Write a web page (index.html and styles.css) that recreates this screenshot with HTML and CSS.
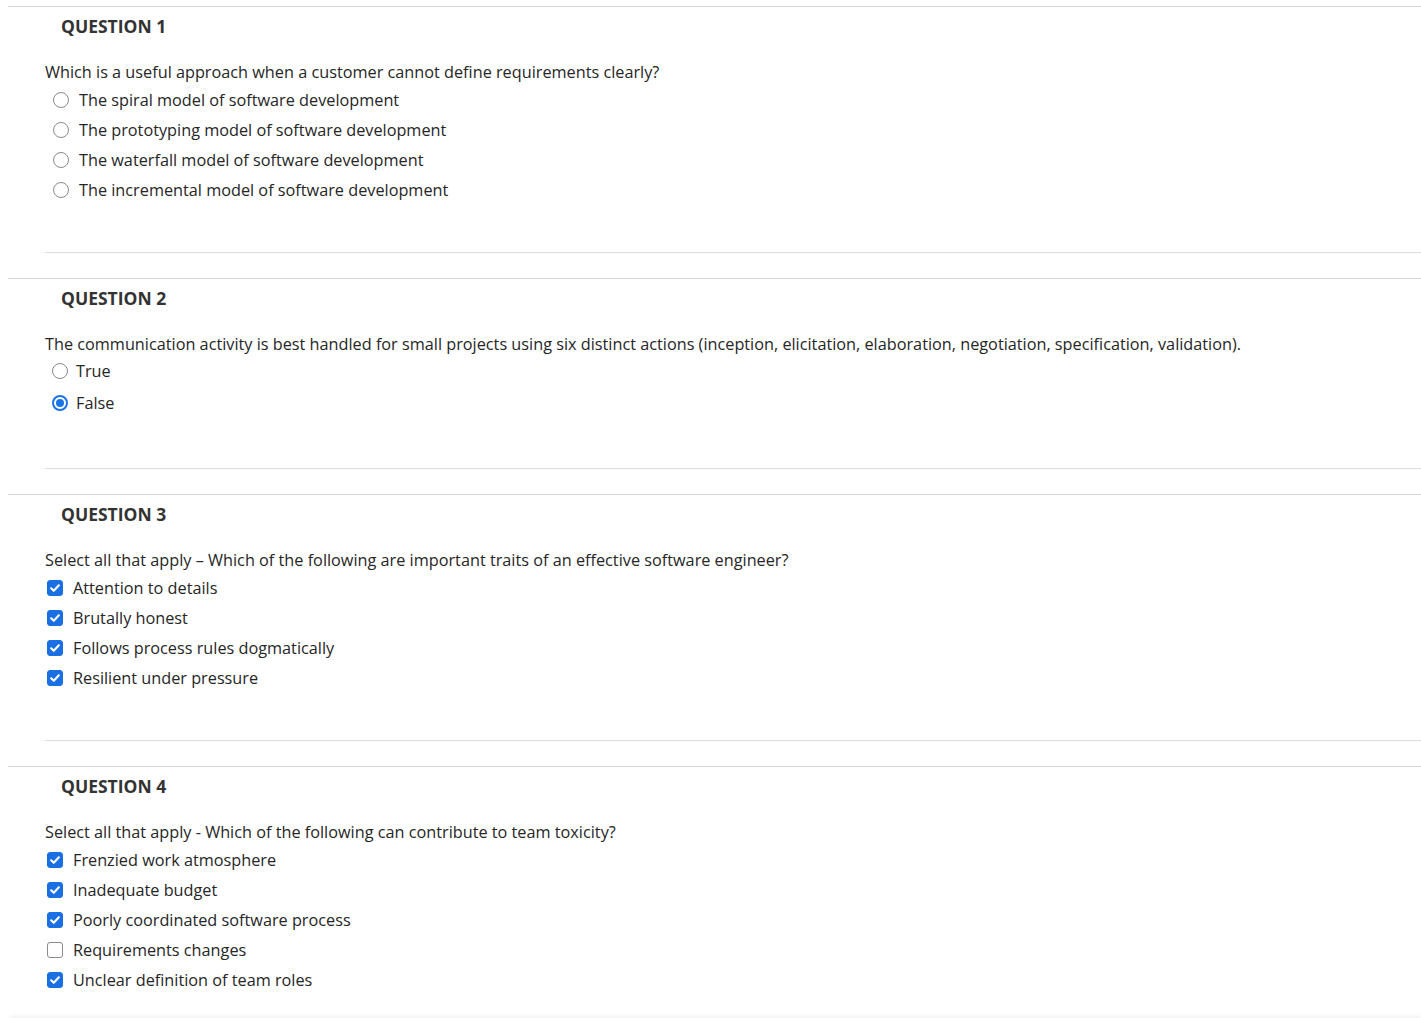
FILE: index.html
```html
<!DOCTYPE html>
<html>
<head>
<meta charset="utf-8">
<link rel="stylesheet" href="styles.css">
</head>
<body>
<div class="page">
  <section class="q">
    <h2 class="q-head">QUESTION 1</h2>
    <div class="q-body">
      <p class="q-text">Which is a useful approach when a customer cannot define requirements clearly?</p>
      <ul class="opts opts-r1">
        <li><span class="radio"></span>The spiral model of software development</li>
        <li><span class="radio"></span>The prototyping model of software development</li>
        <li><span class="radio"></span>The waterfall model of software development</li>
        <li><span class="radio"></span>The incremental model of software development</li>
      </ul>
    </div>
  </section>
  <section class="q">
    <h2 class="q-head">QUESTION 2</h2>
    <div class="q-body q-body-tf">
      <p class="q-text">The communication activity is best handled for small projects using six distinct actions (inception, elicitation, elaboration, negotiation, specification, validation).</p>
      <ul class="opts opts-r2">
        <li><span class="radio"></span>True</li>
        <li><span class="radio checked"></span>False</li>
      </ul>
    </div>
  </section>
  <section class="q">
    <h2 class="q-head">QUESTION 3</h2>
    <div class="q-body">
      <p class="q-text">Select all that apply – Which of the following are important traits of an effective software engineer?</p>
      <ul class="opts opts-c">
        <li><span class="cb on"><svg viewBox="0 0 16 16"><path d="M3.6 8.3 L6.6 11.2 L12.4 4.9" fill="none" stroke="#fff" stroke-width="2.4" stroke-linecap="round" stroke-linejoin="round"/></svg></span>Attention to details</li>
        <li><span class="cb on"><svg viewBox="0 0 16 16"><path d="M3.6 8.3 L6.6 11.2 L12.4 4.9" fill="none" stroke="#fff" stroke-width="2.4" stroke-linecap="round" stroke-linejoin="round"/></svg></span>Brutally honest</li>
        <li><span class="cb on"><svg viewBox="0 0 16 16"><path d="M3.6 8.3 L6.6 11.2 L12.4 4.9" fill="none" stroke="#fff" stroke-width="2.4" stroke-linecap="round" stroke-linejoin="round"/></svg></span>Follows process rules dogmatically</li>
        <li><span class="cb on"><svg viewBox="0 0 16 16"><path d="M3.6 8.3 L6.6 11.2 L12.4 4.9" fill="none" stroke="#fff" stroke-width="2.4" stroke-linecap="round" stroke-linejoin="round"/></svg></span>Resilient under pressure</li>
      </ul>
    </div>
  </section>
  <section class="q q-last">
    <h2 class="q-head">QUESTION 4</h2>
    <div class="q-body q-body-last">
      <p class="q-text">Select all that apply - Which of the following can contribute to team toxicity?</p>
      <ul class="opts opts-c">
        <li><span class="cb on"><svg viewBox="0 0 16 16"><path d="M3.6 8.3 L6.6 11.2 L12.4 4.9" fill="none" stroke="#fff" stroke-width="2.4" stroke-linecap="round" stroke-linejoin="round"/></svg></span>Frenzied work atmosphere</li>
        <li><span class="cb on"><svg viewBox="0 0 16 16"><path d="M3.6 8.3 L6.6 11.2 L12.4 4.9" fill="none" stroke="#fff" stroke-width="2.4" stroke-linecap="round" stroke-linejoin="round"/></svg></span>Inadequate budget</li>
        <li><span class="cb on"><svg viewBox="0 0 16 16"><path d="M3.6 8.3 L6.6 11.2 L12.4 4.9" fill="none" stroke="#fff" stroke-width="2.4" stroke-linecap="round" stroke-linejoin="round"/></svg></span>Poorly coordinated software process</li>
        <li><span class="cb"></span>Requirements changes</li>
        <li><span class="cb on"><svg viewBox="0 0 16 16"><path d="M3.6 8.3 L6.6 11.2 L12.4 4.9" fill="none" stroke="#fff" stroke-width="2.4" stroke-linecap="round" stroke-linejoin="round"/></svg></span>Unclear definition of team roles</li>
      </ul>
    </div>
  </section>
  <div class="shade"></div>
</div>
</body>
</html>
```

FILE: styles.css
```css
html, body {
  margin: 0;
  padding: 0;
  background: #fff;
}
body {
  font-family: "Open Sans", "Noto Sans", sans-serif;
  color: #262626;
  overflow: hidden;
}
.page {
  padding-top: 6px;
  height: 1012px;
  overflow: hidden;
}
.q {
  margin-left: 8px;
  border-top: 1px solid #d6d6d6;
}
.q-head {
  margin: 0;
  padding: 6px 0 0 53px;
  font-size: 17.5px;
  line-height: 26px;
  font-weight: 700;
  color: #333;
}
.q-body {
  margin: 22px 0 25px 37px;
  padding-bottom: 47px;
  border-bottom: 1px solid #dcdcdc;
}
.q-body-tf {
  padding-bottom: 49px;
}
.q-body-last {
  border-bottom: none;
  padding-bottom: 0;
  margin-bottom: 0;
}
.q-text {
  margin: 0;
  font-size: 16.25px;
  line-height: 22px;
}
.opts {
  list-style: none;
  margin: 0;
  padding: 0;
  font-size: 16.25px;
}
.opts li {
  display: flex;
  align-items: center;
  height: 30px;
}
.opts-r1, .opts-c { margin-top: 2px; }
.opts-r1 li { padding-left: 8px; }
.opts-r1 .radio { margin-right: 10px; }
.opts-r2 li { height: 32px; padding-left: 7px; }
.opts-r2 .radio { margin-right: 8px; }
.opts-c li { padding-left: 2px; }
.radio {
  box-sizing: border-box;
  width: 16px;
  height: 16px;
  border-radius: 50%;
  border: 1px solid #8a8a8a;
  background: #fff;
  flex: none;
  position: relative;
}
.radio.checked {
  border: 2px solid #1a73e8;
}
.radio.checked::after {
  content: "";
  position: absolute;
  left: 2px;
  top: 2px;
  width: 8px;
  height: 8px;
  border-radius: 50%;
  background: #1a73e8;
}
.cb {
  box-sizing: border-box;
  width: 16px;
  height: 16px;
  border-radius: 3px;
  border: 1px solid #8a8a8a;
  background: #fff;
  flex: none;
  margin-right: 10px;
  display: flex;
}
.cb.on {
  background: #1a6fe3;
  border-color: #1a6fe3;
}
.cb svg {
  width: 14px;
  height: 14px;
}
.shade {
  margin: 23px 0 0 10px;
  height: 6px;
  background: linear-gradient(#f2f2f2, #e6e6e6);
  box-shadow: 0 -2px 4px rgba(0,0,0,0.06);
}
```
